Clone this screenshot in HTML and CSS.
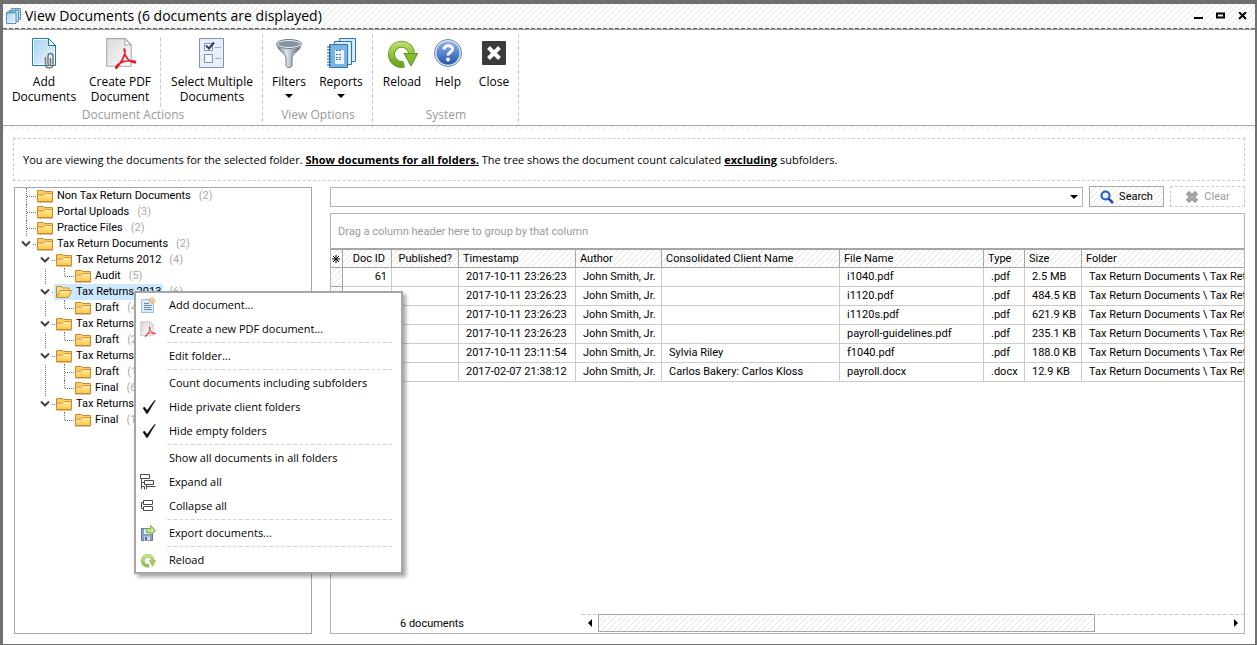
FILE: index.html
```html
<!DOCTYPE html>
<html lang="en">
<head>
    <meta charset="UTF-8">
    <meta name="viewport" content="width=device-width, initial-scale=1.0">
    <title>View Documents</title>
    <link rel="stylesheet" href="styles.css">
</head>
<body>
<!-- shared icons -->
<svg class="defs" width="0" height="0" aria-hidden="true">
    <defs>
        <linearGradient id="gold" x1="0" y1="0" x2="0" y2="1"><stop offset="0" stop-color="#fff0a8"/><stop offset="1" stop-color="#fbc94f"/></linearGradient>
        <linearGradient id="blue" x1="0" y1="0" x2="1" y2="1"><stop offset="0" stop-color="#a9d4ee"/><stop offset="1" stop-color="#eaf7fd"/></linearGradient>
        <linearGradient id="sheet" x1="0" y1="0" x2="1" y2="1"><stop offset="0" stop-color="#d9d9d9"/><stop offset="1" stop-color="#fdfdfd"/></linearGradient>
        <linearGradient id="steel" x1="0" y1="0" x2="1" y2="0"><stop offset="0" stop-color="#66778c"/><stop offset=".4" stop-color="#dfe5ec"/><stop offset="1" stop-color="#4d5d73"/></linearGradient>
        <linearGradient id="green" x1="0" y1="0" x2="0" y2="1"><stop offset="0" stop-color="#b9dc66"/><stop offset="1" stop-color="#6aa51f"/></linearGradient>
        <linearGradient id="help" x1="0" y1="0" x2="0" y2="1"><stop offset="0" stop-color="#8db4ea"/><stop offset="1" stop-color="#2456b0"/></linearGradient>
        <symbol id="folder" viewBox="0 0 16 14">
            <path d="M.5 12.500V1.500h6l1 1h8v10z" fill="#f6cf6a" stroke="#c98a2b"/>
            <path d="M1.500 11.500V6.500h5l1.500-2h6.500v7z" fill="url(#gold)"/>
            <path d="M1 6h5.500L8 4.500h7" fill="none" stroke="#d59a3a"/>
            <path d="M0 13.500h16" stroke="#d9c7a2"/>
        </symbol>
        <symbol id="folder-open" viewBox="0 0 16 14">
            <path d="M.5 12.500v-11h5l1 1.500h6.500v3" fill="#fbe08c" stroke="#c98a2b"/>
            <path d="M.8 12.500L4 5.500h11.500l-3 7z" fill="url(#gold)" stroke="#c98a2b"/>
        </symbol>
        <symbol id="chevron" viewBox="0 0 10 8"><path d="M1 1.500l4 4 4-4" fill="none" stroke="#404040" stroke-width="2"/></symbol>
        <symbol id="reload" viewBox="0 0 30 30">
            <path d="M17 25.500A9.500 9.500 0 1 1 24 15" fill="none" stroke="#5c9a22" stroke-width="6.500"/>
            <path d="M16.500 25.500A9.500 9.500 0 1 1 24 15.500" fill="none" stroke="url(#green)" stroke-width="5"/>
            <path d="M17 15.500h12.500L23.500 27z" fill="#85bb31" stroke="#5c9a22"/>
        </symbol>
        <symbol id="pdf" viewBox="0 0 30 30">
            <path d="M1.500 1.500h17l6 6v20h-23z" fill="url(#sheet)" stroke="#a9a9a9"/>
            <path d="M18.500 1.500v6h6z" fill="#fff" stroke="#a9a9a9"/>
            <path d="M18 11c2 3-1 10-7 18-2 1-1-2 2-4 5-3 10-3.500 16-2 1 2-3 1-5 0-3-2-6-6-6-12z" fill="none" stroke="#e2202c" stroke-width="1.600" stroke-linejoin="round"/>
        </symbol>
        <symbol id="tick" viewBox="0 0 14 14"><path d="M1 8l1.500-1 2.500 3.500L12.500.5h.8L5.500 13.500h-1z" fill="#111" stroke="#111" stroke-width=".5"/></symbol>
    </defs>
</svg>

<div class="window">
    <header class="titlebar">
        <svg class="app-icon" width="16" height="16" viewBox="0 0 16 16">
            <g fill="#b9d9f2" stroke="#5a93bd"><path d="M5.500.5h9v11h-9z"/><path d="M3.500 2.500h9v11h-9z"/><path d="M.5 4.500h9.500v11H.5z" fill="url(#blue)"/></g>
            <path d="M2 3v3M4.500 3v3M7 3v3M9.500 1v3M12 0v3" stroke="#5a93bd"/>
        </svg>
        <h1>View Documents (6 documents are displayed)</h1>
        <div class="window-buttons">
            <button type="button" aria-label="Minimize"><svg width="10" height="8" viewBox="0 0 10 8"><path d="M0 6h9" stroke="#000" stroke-width="2"/></svg></button>
            <button type="button" aria-label="Maximize"><svg width="10" height="8" viewBox="0 0 10 8"><path d="M1 1.500h7v4H1z" fill="none" stroke="#000" stroke-width="2"/></svg></button>
            <button type="button" aria-label="Close window"><svg width="10" height="8" viewBox="0 0 10 8"><path d="M1 0l7 7M8 0L1 7" stroke="#000" stroke-width="2"/></svg></button>
        </div>
    </header>

    <nav class="ribbon">
        <section class="group group-actions">
            <div class="group-items">
                <button type="button" class="tool tool-add">
                    <svg width="30" height="32" viewBox="0 0 30 32">
                        <path d="M3.500 1.500h16l7 7v20h-23z" fill="#fff" stroke="#1680b5"/>
                        <path d="M5 3h14l6 6v18H5z" fill="url(#blue)"/>
                        <path d="M19.500 1.500v7h7z" fill="#fff" stroke="#1680b5"/>
                        <path d="M16.500 20v7.500c0 4.500 7.500 4.500 7.500 0V19c0-3.500-5-3.500-5 0v8c0 2 2.500 2 2.500 0v-6" fill="none" stroke="#73777c" stroke-width="1.500"/>
                    </svg>
                    <span>Add<br>Documents</span>
                </button>
                <button type="button" class="tool tool-pdf">
                    <svg width="32" height="32" viewBox="-1 0 30 30"><use href="#pdf" width="30" height="30"/></svg>
                    <span>Create PDF<br>Document</span>
                </button>
                <button type="button" class="tool tool-select">
                    <svg width="30" height="32" viewBox="0 0 30 32">
                        <path d="M2.500 1.500h24v29h-24z" fill="#e9eff9" stroke="#8193bd"/>
                        <path d="M7.500 6.500h8v7h-8zM7.500 17.500h8v8h-8z" fill="#f5f8fd" stroke="#7b8fc0"/>
                        <path d="M18 10.500h6M18 21.500h6" stroke="#9aabd2"/>
                        <path d="M9 8.500l3 3 5-6" fill="none" stroke="#333d55" stroke-width="2"/>
                    </svg>
                    <span>Select Multiple<br>Documents</span>
                </button>
            </div>
            <h2>Document Actions</h2>
        </section>
        <section class="group group-view">
            <div class="group-items">
                <button type="button" class="tool">
                    <svg width="30" height="32" viewBox="0 0 30 32">
                        <path d="M3 7c0 7 8 8 9 14v8c1 2 5 2 6 0v-8c1-6 9-7 9-14z" fill="url(#steel)" stroke="#6d7a8c"/>
                        <ellipse cx="15" cy="7" rx="12" ry="4" fill="#8592a4" stroke="#eef2f6" stroke-width="2"/>
                        <ellipse cx="15" cy="7" rx="12.500" ry="4.500" fill="none" stroke="#6b7788"/>
                    </svg>
                    <span>Filters</span><i class="caret"></i>
                </button>
                <button type="button" class="tool">
                    <svg width="32" height="32" viewBox="0 0 32 32">
                        <g fill="#d5eafa" stroke="#2f77a8"><path d="M14.500 1.500h16v23h-16z"/><path d="M9.500 4.500h17v23h-17z"/><path d="M4.500 7.500h18v23h-18z" fill="#79b4e2"/></g>
                        <path d="M10 13h9v14h-9z" fill="#e9f4fc"/>
                        <path d="M11 13.500h6M11 17.500h6M11 20.500h6M11 22.500h6" stroke="#48789c" stroke-dasharray="2 1"/>
                        <path d="M2 10h4M2 13h4M2 16h4M2 19h4M2 22h4M2 25h4M2 28h4" stroke="#195b88"/>
                    </svg>
                    <span>Reports</span><i class="caret"></i>
                </button>
            </div>
            <h2>View Options</h2>
        </section>
        <section class="group group-system">
            <div class="group-items">
                <button type="button" class="tool">
                    <svg width="32" height="32" viewBox="0 0 30 30"><use href="#reload" width="30" height="30"/></svg>
                    <span>Reload</span>
                </button>
                <button type="button" class="tool">
                    <svg width="30" height="32" viewBox="0 0 30 32">
                        <circle cx="15" cy="16" r="13.500" fill="#dfe7f2" stroke="#6785b3"/>
                        <circle cx="15" cy="16" r="11.500" fill="url(#help)"/>
                        <path d="M11 12.500c0-5 8.500-5 8.500-.5 0 3.500-4.500 3-4.500 6.500" fill="none" stroke="#fff" stroke-width="3"/>
                        <circle cx="15" cy="22.500" r="2" fill="#fff"/>
                    </svg>
                    <span>Help</span>
                </button>
                <button type="button" class="tool">
                    <svg width="30" height="32" viewBox="0 0 30 32">
                        <rect x="3" y="4" width="24" height="24" rx="1" fill="#3a3a3a"/>
                        <path d="M9.500 10.500l11 11M20.500 10.500l-11 11" stroke="#fff" stroke-width="4"/>
                    </svg>
                    <span>Close</span>
                </button>
            </div>
            <h2>System</h2>
        </section>
    </nav>

    <main class="content">
        <p class="notice">You are viewing the documents for the selected folder. <a href="#">Show documents for all folders.</a> The tree shows the document count calculated <a href="#">excluding</a> subfolders.</p>

        <div class="panes">
            <ul class="tree">
                <li><div class="row"><span class="node"><svg><use href="#folder"/></svg>Non Tax Return Documents</span><span class="count">(2)</span></div></li>
                <li><div class="row"><span class="node"><svg><use href="#folder"/></svg>Portal Uploads</span><span class="count">(3)</span></div></li>
                <li><div class="row"><span class="node"><svg><use href="#folder"/></svg>Practice Files</span><span class="count">(2)</span></div></li>
                <li>
                    <div class="row"><button type="button" class="toggle" aria-label="Collapse"><svg><use href="#chevron"/></svg></button><span class="node"><svg><use href="#folder"/></svg>Tax Return Documents</span><span class="count">(2)</span></div>
                    <ul>
                        <li>
                            <div class="row"><button type="button" class="toggle" aria-label="Collapse"><svg><use href="#chevron"/></svg></button><span class="node"><svg><use href="#folder"/></svg>Tax Returns 2012</span><span class="count">(4)</span></div>
                            <ul>
                                <li><div class="row"><span class="node"><svg><use href="#folder"/></svg>Audit</span><span class="count">(5)</span></div></li>
                            </ul>
                        </li>
                        <li>
                            <div class="row"><button type="button" class="toggle" aria-label="Collapse"><svg><use href="#chevron"/></svg></button><span class="node selected"><svg><use href="#folder-open"/></svg>Tax Returns 2013</span><span class="count">(6)</span></div>
                            <ul>
                                <li><div class="row"><span class="node"><svg><use href="#folder"/></svg>Draft</span><span class="count">(4)</span></div></li>
                            </ul>
                        </li>
                        <li>
                            <div class="row"><button type="button" class="toggle" aria-label="Collapse"><svg><use href="#chevron"/></svg></button><span class="node"><svg><use href="#folder"/></svg>Tax Returns 2014</span><span class="count">(3)</span></div>
                            <ul>
                                <li><div class="row"><span class="node"><svg><use href="#folder"/></svg>Draft</span><span class="count">(2)</span></div></li>
                            </ul>
                        </li>
                        <li>
                            <div class="row"><button type="button" class="toggle" aria-label="Collapse"><svg><use href="#chevron"/></svg></button><span class="node"><svg><use href="#folder"/></svg>Tax Returns 2015</span><span class="count">(3)</span></div>
                            <ul>
                                <li><div class="row"><span class="node"><svg><use href="#folder"/></svg>Draft</span><span class="count">(1)</span></div></li>
                                <li><div class="row"><span class="node"><svg><use href="#folder"/></svg>Final</span><span class="count">(6)</span></div></li>
                            </ul>
                        </li>
                        <li>
                            <div class="row"><button type="button" class="toggle" aria-label="Collapse"><svg><use href="#chevron"/></svg></button><span class="node"><svg><use href="#folder"/></svg>Tax Returns 2016</span><span class="count">(2)</span></div>
                            <ul>
                                <li><div class="row"><span class="node"><svg><use href="#folder"/></svg>Final</span><span class="count">(1)</span></div></li>
                            </ul>
                        </li>
                    </ul>
                </li>
            </ul>

            <section class="documents">
                <form class="search">
                    <div class="combo">
                        <input type="text" aria-label="Search text">
                        <button type="button" aria-label="Show history"><i class="caret"></i></button>
                    </div>
                    <button type="button" class="button">
                        <svg width="14" height="14" viewBox="0 0 14 14"><circle cx="5.500" cy="5.500" r="4" fill="#e9f2ff" stroke="#1b5fc4" stroke-width="2"/><path d="M8.500 8.500l4.500 4.500" stroke="#1b4fae" stroke-width="2.500"/></svg>
                        Search
                    </button>
                    <button type="button" class="button" disabled>
                        <svg width="14" height="14" viewBox="0 0 14 14"><path d="M2.500 2.500l9 9M11.500 2.500l-9 9" stroke="#828282" stroke-width="4.500"/><path d="M2.500 2.500l9 9M11.500 2.500l-9 9" stroke="#a9a9a9" stroke-width="3"/></svg>
                        Clear
                    </button>
                </form>

                <div class="grid">
                    <p class="group-by">Drag a column header here to group by that column</p>
                    <div class="table-wrap">
                        <table>
                            <colgroup>
                                <col class="c-mark"><col class="c-id"><col class="c-pub"><col class="c-time"><col class="c-author"><col class="c-client"><col class="c-file"><col class="c-type"><col class="c-size"><col>
                            </colgroup>
                            <thead>
                                <tr><th class="mark"><svg width="8" height="8" viewBox="0 0 8 8"><path d="M4 0v8M0 4h8M1 1l6 6M7 1L1 7" stroke="#000"/></svg></th><th class="num">Doc ID</th><th class="pub">Published?</th><th>Timestamp</th><th>Author</th><th>Consolidated Client Name</th><th>File Name</th><th>Type</th><th>Size</th><th>Folder</th></tr>
                            </thead>
                            <tbody>
                                <tr><td class="mark"></td><td class="num">61</td><td></td><td>2017-10-11 23:26:23</td><td>John Smith, Jr.</td><td></td><td>i1040.pdf</td><td>.pdf</td><td>2.5 MB</td><td>Tax Return Documents \ Tax Returns 2013</td></tr>
                                <tr><td class="mark"></td><td class="num">62</td><td></td><td>2017-10-11 23:26:23</td><td>John Smith, Jr.</td><td></td><td>i1120.pdf</td><td>.pdf</td><td>484.5 KB</td><td>Tax Return Documents \ Tax Returns 2013</td></tr>
                                <tr><td class="mark"></td><td class="num">63</td><td></td><td>2017-10-11 23:26:23</td><td>John Smith, Jr.</td><td></td><td>i1120s.pdf</td><td>.pdf</td><td>621.9 KB</td><td>Tax Return Documents \ Tax Returns 2013</td></tr>
                                <tr><td class="mark"></td><td class="num">64</td><td></td><td>2017-10-11 23:26:23</td><td>John Smith, Jr.</td><td></td><td>payroll-guidelines.pdf</td><td>.pdf</td><td>235.1 KB</td><td>Tax Return Documents \ Tax Returns 2013</td></tr>
                                <tr><td class="mark"></td><td class="num">60</td><td></td><td>2017-10-11 23:11:54</td><td>John Smith, Jr.</td><td>Sylvia Riley</td><td>f1040.pdf</td><td>.pdf</td><td>188.0 KB</td><td>Tax Return Documents \ Tax Returns 2013</td></tr>
                                <tr><td class="mark"></td><td class="num">12</td><td></td><td>2017-02-07 21:38:12</td><td>John Smith, Jr.</td><td>Carlos Bakery: Carlos Kloss</td><td>payroll.docx</td><td>.docx</td><td>12.9 KB</td><td>Tax Return Documents \ Tax Returns 2013</td></tr>
                            </tbody>
                        </table>
                    </div>
                    <footer class="grid-footer">
                        <span class="total">6 documents</span>
                        <div class="scrollbar">
                            <button type="button" aria-label="Scroll left"><svg width="4" height="8" viewBox="0 0 4 8"><path d="M4 0v8L0 4z"/></svg></button>
                            <div class="track"><div class="thumb"></div></div>
                            <button type="button" aria-label="Scroll right"><svg width="4" height="8" viewBox="0 0 4 8"><path d="M0 0v8l4-4z"/></svg></button>
                        </div>
                    </footer>
                </div>
            </section>
        </div>
    </main>

    <ul class="menu">
        <li><button type="button"><svg viewBox="0 0 16 16"><path d="M1.500 2.500h12v13h-12z" fill="#dcebf9" stroke="#9cc0e2"/><path d="M4 6.500h5M4 8.500h8M4 10.500h7M4 12.500h8" stroke="#6f8aa3"/><path d="M12 0v7M8.500 3.500h7M9.500 1l5 5M14.500 1l-5 5" stroke="#e0a458"/><circle cx="12" cy="3.500" r="2" fill="#f6c98a"/></svg>Add document...</button></li>
        <li><button type="button"><svg viewBox="0 0 30 30"><use href="#pdf" width="30" height="30"/></svg>Create a new PDF document...</button></li>
        <li class="divider"></li>
        <li><button type="button"><svg></svg>Edit folder...</button></li>
        <li class="divider"></li>
        <li><button type="button"><svg></svg>Count documents including subfolders</button></li>
        <li><button type="button"><svg viewBox="-2 -1 16 16"><use href="#tick" width="14" height="14"/></svg>Hide private client folders</button></li>
        <li><button type="button"><svg viewBox="-2 -1 16 16"><use href="#tick" width="14" height="14"/></svg>Hide empty folders</button></li>
        <li class="divider"></li>
        <li><button type="button"><svg></svg>Show all documents in all folders</button></li>
        <li><button type="button"><svg viewBox="0 0 16 16"><path d="M.5.5h9v4h-9zM4.500 6.500h9v4h-9zM1.500 5v10M1.500 8.500h3M6.500 11v4M6.500 12.500h9M1.500 12.500h3v3" fill="none" stroke="#4a4a4a"/></svg>Expand all</button></li>
        <li><button type="button"><svg viewBox="0 0 16 16"><path d="M3.500 2.500h9v4h-9zM3.500 8.500h9v4h-9zM3.500 4.500h-2v6h2" fill="none" stroke="#4a4a4a"/></svg>Collapse all</button></li>
        <li class="divider"></li>
        <li><button type="button"><svg viewBox="0 0 16 16"><path d="M1.500 3.500h11v12h-11z" fill="#8ba0c6" stroke="#6279a3"/><path d="M4 4h6v5H4z" fill="#e3e9f3"/><path d="M4 11.500h6v4H4z" fill="#d7dde8"/><path d="M5 12h2v3H5z" fill="#4f668f"/><path d="M6.500 3.500h4v-3l5 5-5 5v-3h-4z" fill="#c2e288" stroke="#7fa853"/></svg>Export documents...</button></li>
        <li class="divider"></li>
        <li><button type="button"><svg class="faded" viewBox="0 0 30 30"><use href="#reload" width="30" height="30"/></svg>Reload</button></li>
    </ul>
</div>
</body>
</html>
```
FILE: styles.css
```css
* {
    box-sizing: border-box;
}
body {
    margin: 0;
    font: 11px/16px "Open Sans", sans-serif;
    color: #000;
    background: #fff;
}
button, input {
    font: inherit;
    color: inherit;
    background: none;
    border: 0;
    padding: 0;
    margin: 0;
}
ul {
    list-style: none;
    margin: 0;
    padding: 0;
}
h1, h2, p {
    margin: 0;
    font-weight: normal;
}
svg {
    flex: none;
    display: block;
}
.defs {
    position: absolute;
}

/* diagonal hatching used on bars, headers and buttons */
.titlebar, .content, th, td.mark, .thumb, .button {
    background-image: linear-gradient(135deg, transparent 45%, #e4e4e4 45%, #e4e4e4 55%, transparent 55%);
    background-size: 6px 6px;
}

.window {
    position: relative;
    display: flex;
    flex-direction: column;
    height: 100vh;
    border: solid #707070;
    border-width: 4px 2px 1px 3px;
}
.titlebar {
    position: relative;
    display: flex;
    align-items: center;
    height: 26px;
    padding: 0 7px 1px 3px;
    border-bottom: 1px solid #9a9a9a;
}
.titlebar::after {
    content: "";
    position: absolute;
    left: 0;
    right: 0;
    bottom: 0;
    height: 1px;
    background: repeating-linear-gradient(to right, #666 0, #666 4px, #fff 4px, #fff 6px);
}
.titlebar h1 {
    flex: 1;
    margin-left: 3px;
    font-size: 14px;
    line-height: 24px;
}
.window-buttons {
    display: flex;
    gap: 12px;
}

/* ribbon */
.ribbon {
    display: flex;
    height: 96px;
    border-bottom: 1px solid #a6a6a6;
    font-size: 12px;
}
.group {
    display: flex;
    flex-direction: column;
    padding-top: 7px;
    background: repeating-linear-gradient(to bottom, #ccc 0, #ccc 4px, transparent 4px, transparent 6px) right 4px / 1px 100% no-repeat;
}
.group-actions { width: 260px; }
.group-view { width: 110px; }
.group-system { width: 146px; }
.group-items {
    display: flex;
    flex: 1;
}
.group-view .group-items { padding-right: 6px; }
.group-system .group-items { padding: 0 2px 0 6px; }
.group h2 {
    font-size: 12px;
    line-height: 16px;
    margin-bottom: 2px;
    text-align: center;
    color: #9a9a9a;
}
.tool {
    flex: 1;
    display: flex;
    flex-direction: column;
    align-items: center;
    line-height: 15px;
    white-space: nowrap;
}
.tool span {
    margin-top: 5px;
}
.tool-add { flex: 0 0 82px; }
.tool-pdf {
    flex: 0 0 76px;
    padding-right: 6px;
    background: repeating-linear-gradient(to bottom, #ccc 0, #ccc 4px, transparent 4px, transparent 6px) right 0 / 1px 100% no-repeat;
}
.caret {
    border: solid transparent;
    border-width: 4px 4px 0;
    border-top-color: #000;
}
.tool .caret {
    margin-top: 5px;
}

/* content */
.content {
    flex: 1;
    display: flex;
    flex-direction: column;
    min-height: 0;
    padding: 12px 10px 10px;
    background-position: 0 -2px;
    background-repeat: repeat-x;
}
.notice {
    padding: 13px 9px 12px;
    border: 1px dashed #ccc;
}
.notice a {
    color: #000;
    font-weight: bold;
}
.panes {
    flex: 1;
    display: flex;
    gap: 18px;
    min-height: 0;
    padding-top: 5px;
    font-family: Roboto, sans-serif;
}

/* folder tree */
.tree {
    flex: 0 0 298px;
    margin: 1px 0 0 1px;
    padding-left: 4px;
    border: 1px solid #a6a6a6;
}
.tree ul {
    padding-left: 19px;
}
.tree li {
    position: relative;
}
.tree li::before {
    content: "";
    position: absolute;
    left: 7px;
    top: 0;
    bottom: 0;
    border-left: 1px dotted #777;
}
.tree li:last-child::before {
    bottom: auto;
    height: 8px;
}
.row {
    position: relative;
    display: flex;
    height: 16px;
    padding-left: 16px;
    white-space: nowrap;
}
.row::before {
    content: "";
    position: absolute;
    left: 8px;
    top: 8px;
    width: 9px;
    border-top: 1px dotted #777;
}
.toggle {
    position: relative;
    width: 14px;
    margin: 0 2px 0 -16px;
    padding-left: 2px;
    background: #fff;
}
.toggle svg {
    width: 10px;
    height: 8px;
}
.node {
    position: relative;
    display: flex;
    align-items: center;
    gap: 4px;
    padding: 0 2px;
}
.node svg {
    width: 16px;
    height: 14px;
}
.selected {
    background: #cce8ff;
}
.count {
    margin-left: 6px;
    color: #aaa;
}

/* search row */
.documents {
    flex: 1;
    display: flex;
    flex-direction: column;
    gap: 6px;
    min-width: 0;
}
.search {
    display: flex;
    align-items: center;
    gap: 6px;
}
.combo {
    flex: 1;
    display: flex;
    height: 20px;
    border: 1px solid #b4b4b4;
}
.combo input {
    flex: 1;
    padding: 0 4px;
}
.combo button {
    display: flex;
    align-items: center;
    width: 12px;
}
.button {
    display: flex;
    align-items: center;
    justify-content: center;
    gap: 5px;
    width: 75px;
    height: 21px;
    border: 1px solid #a6a6a6;
}
.button:disabled {
    border: 1px dashed #ccc;
    color: #9a9a9a;
    background: none;
}

/* document grid */
.grid {
    flex: 1;
    display: flex;
    flex-direction: column;
    min-height: 0;
    border: 1px solid #b4b4b4;
}
.group-by {
    padding: 10px 7px 8px;
    color: #9a9a9a;
}
.table-wrap {
    flex: 1;
    overflow: hidden;
    border-top: 2px solid #a6a6a6;
}
table {
    width: 100%;
    table-layout: fixed;
    border-collapse: separate;
    border-spacing: 0;
}
.c-mark { width: 12px; }
.c-id { width: 49px; }
.c-pub { width: 67px; }
.c-time { width: 117px; }
.c-author { width: 86px; }
.c-client { width: 178px; }
.c-file { width: 144px; }
.c-type { width: 41px; }
.c-size { width: 57px; }
th, td {
    height: 19px;
    padding: 0 0 0 7px;
    border: solid #ccc;
    border-width: 0 1px 1px 0;
    line-height: 18px;
    text-align: left;
    font-weight: normal;
    white-space: nowrap;
    overflow: hidden;
}
th {
    height: 18px;
    padding-left: 4px;
    border-color: #a6a6a6;
    line-height: 17px;
}
th:last-child, td:last-child {
    border-right: 0;
}
th.num, th.pub {
    padding: 0 6px 0 0;
    text-align: right;
}
td.num {
    padding: 0 4px 0 0;
    text-align: right;
}
th.mark, td.mark {
    padding: 0 0 0 1px;
    border-color: #a6a6a6;
}
.grid-footer {
    display: flex;
    height: 19px;
}
.total {
    flex: 0 0 250px;
    padding-left: 69px;
    line-height: 20px;
}
.scrollbar {
    flex: 1;
    display: flex;
    background: repeating-linear-gradient(to right, #ccc 0, #ccc 4px, transparent 4px, transparent 6px) 0 0 / 100% 1px no-repeat;
}
.scrollbar button {
    display: flex;
    align-items: center;
    justify-content: center;
    flex: 0 0 17px;
    height: 18px;
}
.track {
    flex: 1;
}
.thumb {
    width: 79%;
    height: 18px;
    border: 1px solid #a6a6a6;
    background-color: #fff;
}

/* context menu */
.menu {
    position: absolute;
    left: 131px;
    top: 287px;
    width: 269px;
    border: 2px solid #a6a6a6;
    background: #fff;
    box-shadow: 3px 3px 4px rgba(0, 0, 0, .35);
}
.menu button {
    display: flex;
    align-items: center;
    gap: 13px;
    width: 100%;
    height: 24px;
    padding-left: 4px;
    white-space: nowrap;
}
.menu svg {
    width: 16px;
    height: 16px;
}
.menu .faded {
    opacity: .75;
}
.divider {
    height: 3px;
    margin: 0 9px 0 31px;
    background: repeating-linear-gradient(to right, #d4d4d4 0, #d4d4d4 4px, transparent 4px, transparent 6px) 0 1px / 100% 1px no-repeat;
}
```
